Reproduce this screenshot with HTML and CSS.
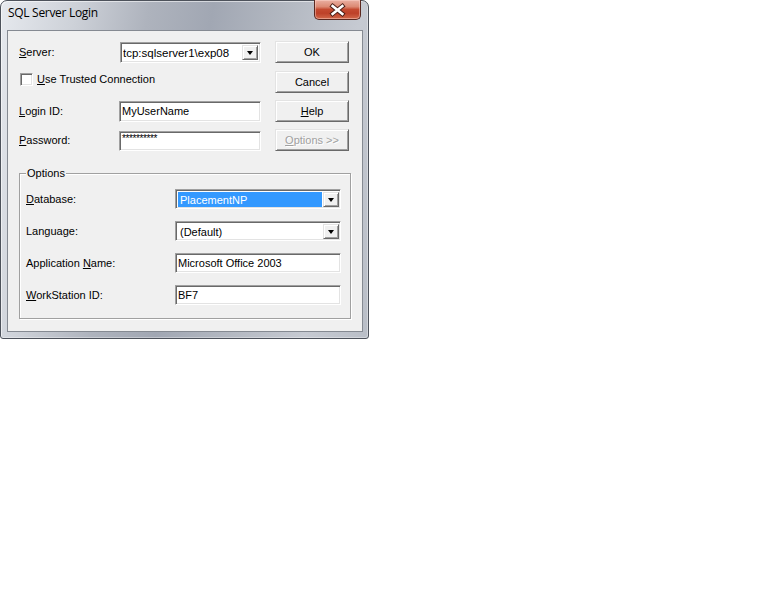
FILE: index.html
```html
<!DOCTYPE html>
<html>
<head>
<meta charset="utf-8">
<title>SQL Server Login</title>
<link rel="stylesheet" href="styles.css">
</head>
<body>
<div class="window">
  <div class="titlebar">
    <span class="title">SQL Server Login</span>
    <div class="close">
      <svg width="47" height="20" viewBox="0 0 47 20">
        <path d="M19 6 L29 14 M29 6 L19 14" stroke="#4a1f18" stroke-width="4.6" stroke-linecap="square" fill="none"/>
        <path d="M19 6 L29 14 M29 6 L19 14" stroke="#ffffff" stroke-width="2.6" stroke-linecap="square" fill="none"/>
      </svg>
    </div>
  </div>
  <div class="client">
    <div class="row">
      <span class="lbl"><u>S</u>erver:</span>
      <div class="sunken combo server"><span class="val">tcp:sqlserver1\exp08</span><span class="drop"><span class="tri"></span></span></div>
      <div class="btn">OK</div>
    </div>
    <div class="row r2">
      <label class="check"><span class="sunken box"></span><span class="ctext"><u>U</u>se Trusted Connection</span></label>
      <div class="btn">Cancel</div>
    </div>
    <div class="row r3">
      <span class="lbl"><u>L</u>ogin ID:</span>
      <div class="sunken text login">MyUserName</div>
      <div class="btn"><span><u>H</u>elp</span></div>
    </div>
    <div class="row r4">
      <span class="lbl"><u>P</u>assword:</span>
      <div class="sunken text pass">**********</div>
      <div class="btn disabled"><span><u>O</u>ptions &gt;&gt;</span></div>
    </div>
    <fieldset class="group">
      <legend>Options</legend>
      <div class="grow">
        <span class="lbl"><u>D</u>atabase:</span>
        <div class="sunken combo wide"><span class="val selected">PlacementNP</span><span class="drop"><span class="tri"></span></span></div>
      </div>
      <div class="grow">
        <span class="lbl">Lan<u>g</u>uage:</span>
        <div class="sunken combo wide"><span class="val">(Default)</span><span class="drop"><span class="tri"></span></span></div>
      </div>
      <div class="grow">
        <span class="lbl">Application <u>N</u>ame:</span>
        <div class="sunken text wide">Microsoft Office 2003</div>
      </div>
      <div class="grow">
        <span class="lbl"><u>W</u>orkStation ID:</span>
        <div class="sunken text wide">BF7</div>
      </div>
    </fieldset>
  </div>
</div>
</body>
</html>
```
FILE: styles.css
```css
html, body {
  margin: 0;
  padding: 0;
  background: #ffffff;
}
body {
  font-family: "Liberation Sans", Arial, sans-serif;
  font-size: 11px;
  color: #000;
}
u {
  text-decoration: underline;
  text-underline-offset: 1px;
}

.window {
  width: 369px;
  height: 339px;
  box-sizing: border-box;
  border: 1px solid #4d525b;
  border-radius: 7px 7px 3px 3px;
  padding: 0 5px 6px 6px;
  background: linear-gradient(100deg, #e6e9ee 0%, #cdd1d8 18%, #aeb3bd 35%, #a1a7b3 50%, #b4b9c2 68%, #c6cad2 85%, #b9bec7 100%);
  box-shadow: inset 1px 1px 0 rgba(255,255,255,0.55), inset -1px -1px 0 rgba(255,255,255,0.35);
  display: flex;
  flex-direction: column;
}

.titlebar {
  height: 29px;
  display: flex;
  justify-content: space-between;
  align-items: flex-start;
}
.title {
  font-family: "Open Sans", "Noto Sans", sans-serif;
  font-size: 12px;
  line-height: 16px;
  padding-top: 4px;
  padding-left: 1px;
  color: #000;
  letter-spacing: -0.3px;
}
.close {
  width: 47px;
  height: 20px;
  box-sizing: border-box;
  margin-top: -1px;
  margin-right: 2px;
  border: 1px solid #5a2820;
  border-top: none;
  border-radius: 0 0 5px 5px;
  background: linear-gradient(to bottom, #eab0a2 0%, #dc8a74 35%, #c44a30 50%, #bd4129 70%, #d2684a 100%);
  box-shadow: inset 0 0 0 1px rgba(255,220,210,0.45);
  display: flex;
  overflow: hidden;
}
.close svg {
  display: block;
  margin-left: -1px;
}

.client {
  width: 356px;
  height: 302px;
  box-sizing: border-box;
  border: 1px solid #858a92;
  background: #f0f0f0;
  padding: 10px 11px 0 11px;
}

.row {
  display: grid;
  grid-template-columns: 100px 142px 88px;
  height: 22px;
  align-items: center;
}
.r2 { margin-top: 8px; }
.r3, .r4 { margin-top: 7px; }

.lbl {
  white-space: nowrap;
  line-height: 13px;
}

.sunken {
  box-sizing: border-box;
  background: #fff;
  border: 1px solid;
  border-color: #a0a0a0 #ffffff #ffffff #a0a0a0;
  box-shadow: inset 1px 1px 0 #696969, inset -1px -1px 0 #e3e3e3;
}

.text {
  width: 142px;
  height: 21px;
  padding: 2px 0 0 2px;
  line-height: 15px;
  white-space: nowrap;
  overflow: hidden;
}
.login { align-self: start; margin-top: 1px; }
.pass {
  height: 20px;
  align-self: start;
  margin-top: 2px;
  font-size: 10px;
  line-height: 12px;
  padding-top: 1px;
  letter-spacing: -0.4px;
}

.combo {
  display: flex;
  padding: 2px 2px 2px 2px;
  height: 21px;
}
.server {
  width: 141px;
  margin-left: 1px;
  font-size: 11.5px;
}
.val {
  flex: 1;
  line-height: 17px;
  white-space: nowrap;
  overflow: hidden;
  padding-left: 0;
  margin-right: 1px;
}
.val.selected {
  background: #3399ff;
  color: #fff;
}
.drop {
  width: 16px;
  box-sizing: border-box;
  background: #f0f0f0;
  border: 1px solid;
  border-color: #e3e3e3 #696969 #696969 #e3e3e3;
  box-shadow: inset 1px 1px 0 #fff, inset -1px -1px 0 #a0a0a0;
  display: flex;
  align-items: center;
  justify-content: center;
}
.tri {
  width: 0;
  height: 0;
  border-left: 3.5px solid transparent;
  border-right: 3.5px solid transparent;
  border-top: 4px solid #000;
  margin-top: 1px;
}

.check {
  grid-column: 1 / 3;
  align-self: start;
  margin-top: 1px;
  height: 15px;
  display: flex;
  align-items: center;
}
.box {
  width: 13px;
  height: 13px;
  margin-left: 1px;
  flex: none;
}
.ctext {
  margin-left: 4px;
  line-height: 13px;
}

.btn {
  justify-self: end;
  width: 74px;
  height: 22px;
  box-sizing: border-box;
  background: #f0f0f0;
  border: 1px solid;
  border-color: #e3e3e3 #696969 #696969 #e3e3e3;
  box-shadow: inset 1px 1px 0 #fff, inset -1px -1px 0 #a0a0a0;
  display: flex;
  align-items: center;
  justify-content: center;
  line-height: 13px;
  white-space: nowrap;
}
.btn.disabled {
  color: #a0a0a0;
  text-shadow: 1px 1px 0 #fff;
}

.group {
  box-sizing: border-box;
  width: 332px;
  margin: 15px 0 0 0;
  padding: 9px 9px 13px 6px;
  border: 1px solid #a0a0a0;
  box-shadow: 1px 1px 0 #fff, inset 1px 1px 0 #fff;
}
.group legend {
  padding: 0 1px;
  line-height: 14px;
  background: #f0f0f0;
}
.grow {
  display: grid;
  grid-template-columns: 149px 166px;
  height: 20px;
  align-items: center;
}
.grow + .grow { margin-top: 12px; }
.wide {
  width: 166px;
  height: 20px;
}
.grow .combo { padding: 2px 1px 1px 2px; }
.grow .val { padding-left: 2px; }
.grow .text { padding-top: 2px; line-height: 14px; }
```
